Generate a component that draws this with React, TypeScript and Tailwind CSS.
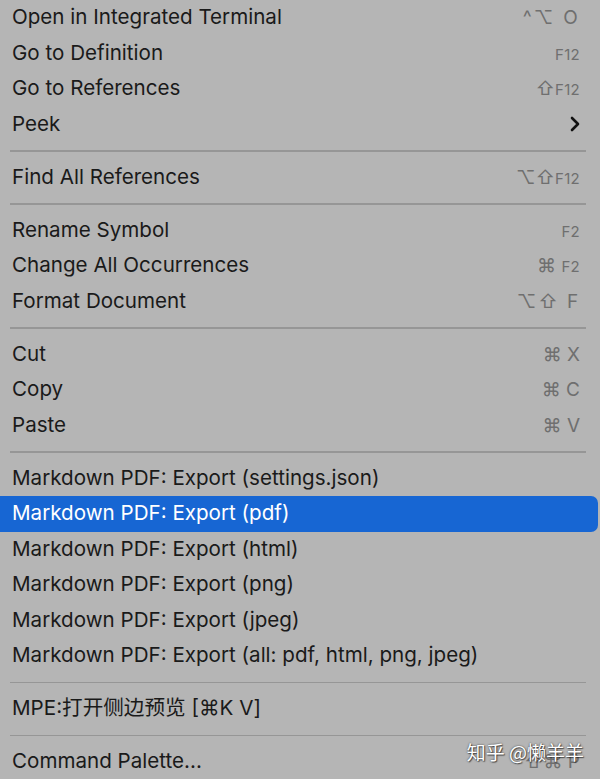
import React from "react";

type Item = { label: string; keys?: React.ReactNode; highlight?: boolean; submenu?: boolean };

const sans = "font-['Inter','Noto_Sans_CJK_SC',sans-serif]";

function Small({ children }: { children: React.ReactNode }) {
  return <span className="text-[15px] tracking-[0.02em]">{children}</span>;
}

const groups: Item[][] = [
  [
    { label: "Open in Integrated Terminal", keys: <span className="tracking-[0.12em]">^⌥ O</span> },
    { label: "Go to Definition", keys: <Small>F12</Small> },
    { label: "Go to References", keys: <span>⇧<Small>F12</Small></span> },
    { label: "Peek", submenu: true },
  ],
  [{ label: "Find All References", keys: <span>⌥⇧<Small>F12</Small></span> }],
  [
    { label: "Rename Symbol", keys: <Small>F2</Small> },
    { label: "Change All Occurrences", keys: <span>⌘ <Small>F2</Small></span> },
    { label: "Format Document", keys: <span className="tracking-[0.1em]">⌥⇧ F</span> },
  ],
  [
    { label: "Cut", keys: <span>⌘ X</span> },
    { label: "Copy", keys: <span>⌘ C</span> },
    { label: "Paste", keys: <span>⌘ V</span> },
  ],
  [
    { label: "Markdown PDF: Export (settings.json)" },
    { label: "Markdown PDF: Export (pdf)", highlight: true },
    { label: "Markdown PDF: Export (html)" },
    { label: "Markdown PDF: Export (png)" },
    { label: "Markdown PDF: Export (jpeg)" },
    { label: "Markdown PDF: Export (all: pdf, html, png, jpeg)" },
  ],
  [{ label: "MPE:打开侧边预览 [⌘K V]" }],
  [{ label: "Command Palette...", keys: <span>⇧⌘ P</span> }],
];

function Row({ item }: { item: Item }) {
  return (
    <div
      className={`flex h-[35.5px] items-center justify-between pl-3 pr-5 ${
        item.highlight ? "mr-[2px] rounded-r-[7px] bg-[#1766d3] text-white" : "text-[#1a1a1a]"
      }`}
    >
      <span className="text-[20.6px] leading-none">{item.label}</span>
      {item.keys && <span className="text-[19px] leading-none text-[#6f6f6f]">{item.keys}</span>}
      {item.submenu && (
        <svg width="10" height="16" viewBox="0 0 10 16">
          <path d="M2 2l6 6-6 6" fill="none" stroke="#111" strokeWidth="2.6" strokeLinecap="round" strokeLinejoin="round" />
        </svg>
      )}
    </div>
  );
}

export default function App() {
  return (
    <div className={`relative h-[779px] w-[600px] overflow-hidden bg-[#b5b5b5] ${sans}`}>
      <div className="flex flex-col">
        {groups.map((g, gi) => (
          <React.Fragment key={gi}>
            {gi > 0 && (
              <div className="flex h-[17.5px] items-center pl-[10px] pr-[14px]">
                <div className="h-[1.5px] w-full bg-[#969696]" />
              </div>
            )}
            {g.map((item) => (
              <Row key={item.label} item={item} />
            ))}
          </React.Fragment>
        ))}
      </div>
      <div className="absolute right-[16px] top-[738px] font-['Noto_Sans_CJK_SC',sans-serif] text-[19px] text-white [text-shadow:0_0_2px_rgba(0,0,0,0.7),1px_1px_1px_rgba(0,0,0,0.5)]">
        知乎 @懒羊羊
      </div>
    </div>
  );
}
